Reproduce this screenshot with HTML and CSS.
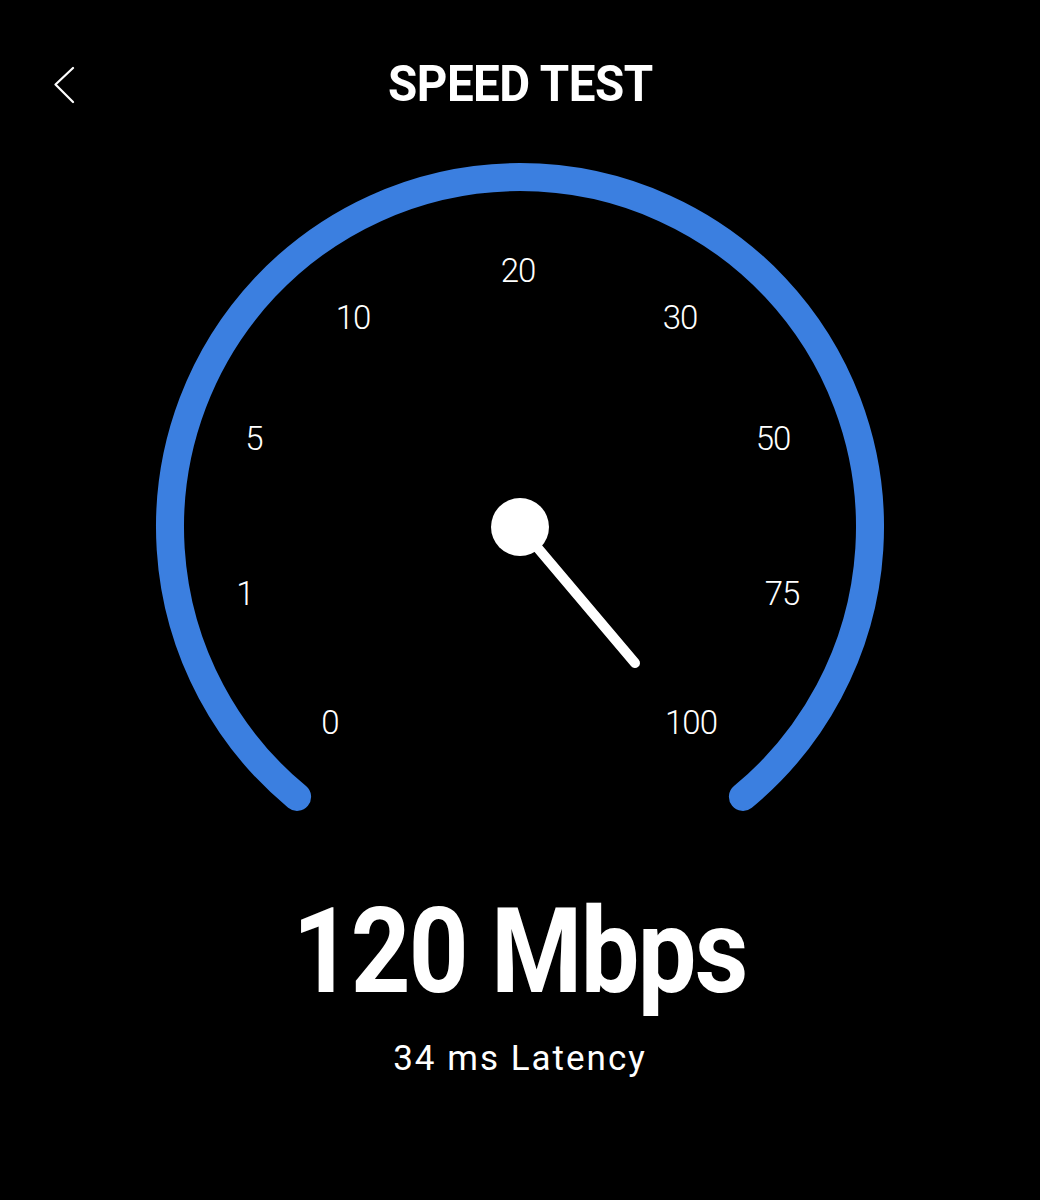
FILE: index.html
```html
<!DOCTYPE html>
<html lang="en">
<head>
    <meta charset="UTF-8">
    <title>Speed Test</title>
    <link rel="stylesheet" href="styles.css">
</head>
<body>
    <div class="header">
        <button class="back-btn" aria-label="Back">
            <svg width="22" height="40" viewBox="0 0 22 40">
                <polyline points="19,3 1.5,19.5 19,37" fill="none" stroke="#fff" stroke-width="2.2" stroke-linecap="round" stroke-linejoin="round"/>
            </svg>
        </button>
        <div class="title">SPEED TEST</div>
    </div>

    <div class="gauge">
        <svg width="760" height="700" viewBox="140 140 760 700">
            <path class="arc" d="M 297.1 796.9 A 350 350 0 1 1 742.9 796.9"/>
            <g class="ticks">
                <text x="330" y="734">0</text>
                <text x="245" y="605">1</text>
                <text x="254" y="450">5</text>
                <text x="353" y="329">10</text>
                <text x="518" y="282">20</text>
                <text x="680" y="329">30</text>
                <text x="773" y="450">50</text>
                <text x="782" y="605">75</text>
                <text x="691" y="734">100</text>
            </g>
            <line class="needle" x1="520" y1="527" x2="635" y2="663"/>
            <circle class="hub" cx="520" cy="527" r="29"/>
        </svg>
    </div>

    <div class="result">
        <div class="speed">120 Mbps</div>
        <div class="latency">34 ms Latency</div>
    </div>
</body>
</html>
```

FILE: styles.css
```css
body {
    margin: 0;
    background: #000;
    color: #fff;
    font-family: Roboto, "Liberation Sans", sans-serif;
    width: 1040px;
    height: 1200px;
    overflow: hidden;
}

.header {
    position: relative;
    height: 140px;
    display: flex;
    align-items: center;
    justify-content: center;
}

.back-btn {
    position: absolute;
    left: 54px;
    top: 65px;
    background: none;
    border: none;
    padding: 0;
    cursor: pointer;
}

.back-btn svg {
    display: block;
}

.title {
    font-size: 50px;
    font-weight: 700;
    letter-spacing: -0.5px;
    margin-top: 28px;
    transform: scaleX(0.95);
}

.gauge {
    display: flex;
    justify-content: center;
}

.gauge svg {
    display: block;
}

.arc {
    fill: none;
    stroke: #3b7fe0;
    stroke-width: 28;
    stroke-linecap: round;
}

.ticks text {
    fill: #fff;
    font-family: Roboto, "Liberation Sans", sans-serif;
    font-size: 33px;
    font-weight: 300;
    text-anchor: middle;
    letter-spacing: -1px;
}

.needle {
    stroke: #fff;
    stroke-width: 10;
    stroke-linecap: round;
}

.hub {
    fill: #fff;
}

.result {
    display: flex;
    flex-direction: column;
    align-items: center;
}

.speed {
    font-size: 118px;
    font-weight: 700;
    letter-spacing: -2px;
    line-height: 1;
    margin-top: 53px;
    transform: scaleX(0.885);
}

.latency {
    font-size: 35px;
    font-weight: 400;
    letter-spacing: 2px;
    margin-top: 27px;
}
```
